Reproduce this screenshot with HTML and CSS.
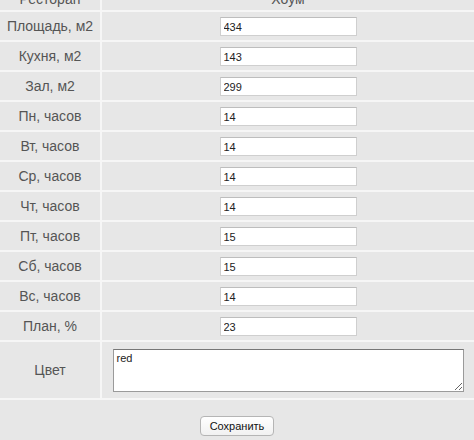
FILE: index.html
```html
<!DOCTYPE html>
<html lang="ru">
<head>
  <meta charset="UTF-8" />
  <meta name="viewport" content="width=device-width, initial-scale=1.0" />
  <title>Ресторан</title>
  <link rel="stylesheet" href="styles.css">
</head>
<body>
  <form class="form">
    <table class="grid">
      <tr class="head">
        <td class="label">Ресторан</td>
        <td class="value">Хоум</td>
      </tr>
      <tr>
        <td class="label">Площадь, м2</td>
        <td class="value"><input type="text" value="434" /></td>
      </tr>
      <tr>
        <td class="label">Кухня, м2</td>
        <td class="value"><input type="text" value="143" /></td>
      </tr>
      <tr>
        <td class="label">Зал, м2</td>
        <td class="value"><input type="text" value="299" /></td>
      </tr>
      <tr>
        <td class="label">Пн, часов</td>
        <td class="value"><input type="text" value="14" /></td>
      </tr>
      <tr>
        <td class="label">Вт, часов</td>
        <td class="value"><input type="text" value="14" /></td>
      </tr>
      <tr>
        <td class="label">Ср, часов</td>
        <td class="value"><input type="text" value="14" /></td>
      </tr>
      <tr>
        <td class="label">Чт, часов</td>
        <td class="value"><input type="text" value="14" /></td>
      </tr>
      <tr>
        <td class="label">Пт, часов</td>
        <td class="value"><input type="text" value="15" /></td>
      </tr>
      <tr>
        <td class="label">Сб, часов</td>
        <td class="value"><input type="text" value="15" /></td>
      </tr>
      <tr>
        <td class="label">Вс, часов</td>
        <td class="value"><input type="text" value="14" /></td>
      </tr>
      <tr>
        <td class="label">План, %</td>
        <td class="value"><input type="text" value="23" /></td>
      </tr>
      <tr class="tall">
        <td class="label">Цвет</td>
        <td class="value"><textarea>red</textarea></td>
      </tr>
      <tr class="actions">
        <td colspan="2"><button type="button">Сохранить</button></td>
      </tr>
    </table>
  </form>
</body>
</html>
```

FILE: styles.css
```css
body {
  margin: 0;
  background-color: #f6f6f6;
  font-family: 'Liberation Sans', Arial, sans-serif;
  color: #555;
}

/* die Seite ist etwas nach unten gescrollt */
.form {
  margin-top: -23px;
}

.grid {
  width: 100%;
  border-collapse: separate;
  border-spacing: 0 2px;
}

.grid td {
  background-color: #e7e7e7;
  height: 28px;
  padding: 0;
  text-align: center;
  font-size: 14px;
}

.head td {
  vertical-align: bottom;
  padding-bottom: 3px;
}

.grid td.label {
  width: 100px;
  border-right: 2px solid #f6f6f6;
}

.grid input[type="text"] {
  box-sizing: border-box;
  width: 137px;
  height: 19px;
  padding: 1px 3px 0;
  border: 1px solid #cfcfcf;
  border-top-color: #bdbdbd;
  background: #fff;
  font-family: 'Liberation Sans', Arial, sans-serif;
  font-size: 11px;
  color: #222;
  vertical-align: middle;
}

.tall td {
  height: 56px;
}

.grid textarea {
  box-sizing: border-box;
  display: block;
  margin: 0 auto;
  width: 351px;
  height: 43px;
  padding: 2px 3px;
  border: 1px solid #9a9a9a;
  border-top-color: #777;
  background: #fff;
  font-family: 'Liberation Sans', Arial, sans-serif;
  font-size: 11px;
  color: #222;
}

.actions td {
  height: 60px;
  vertical-align: top;
  padding-top: 16px;
}

.actions button {
  height: 20px;
  padding: 0 9px;
  border: 1px solid #b5b5b5;
  border-radius: 4px;
  background: linear-gradient(#ffffff, #f1f1f1);
  font-family: 'Liberation Sans', Arial, sans-serif;
  font-size: 11px;
  color: #111;
}
```
